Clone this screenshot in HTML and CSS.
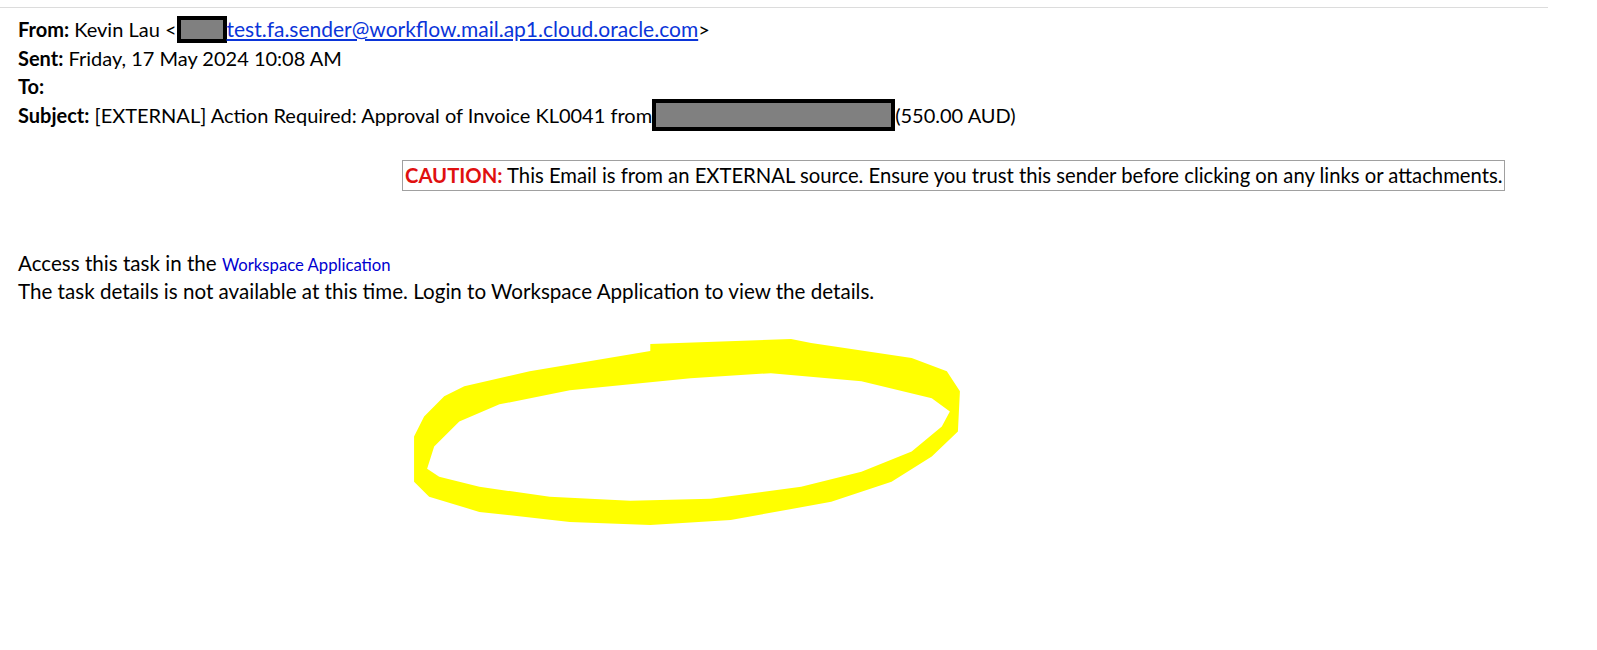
FILE: index.html
```html
<!DOCTYPE html>
<html lang="en">
<head>
    <meta charset="UTF-8">
    <title>Action Required: Approval of Invoice KL0041</title>
    <link rel="stylesheet" href="styles.css">
</head>
<body>
    <div class="top-rule"></div>

    <div class="mail-header">
        <div class="header-line"><b>From:</b> Kevin Lau &lt;<span class="redact redact-small"></span><a class="mail-link" href="#">test.fa.sender@workflow.mail.ap1.cloud.oracle.com</a>&gt;</div>
        <div class="header-line"><b>Sent:</b> Friday, 17 May 2024 10:08 AM</div>
        <div class="header-line"><b>To:</b></div>
        <div class="header-line"><b>Subject:</b> [EXTERNAL] Action Required: Approval of Invoice KL0041 from<span class="redact redact-wide"></span>(550.00 AUD)</div>
    </div>

    <div class="caution-box">
        <span class="caution-label">CAUTION:</span> This Email is from an EXTERNAL source. Ensure you trust this sender before clicking on any links or attachments.
    </div>

    <div class="mail-body">
        <div class="body-line">Access this task in the <a class="task-link" href="#">Workspace Application</a></div>
        <div class="body-line">The task details is not available at this time. Login to Workspace Application to view the details.</div>
    </div>

    <!-- highlighter scribble drawn over the empty area -->
    <svg class="scribble" width="555" height="191" viewBox="0 0 548 190">
        <path fill="#ffff00" fill-rule="evenodd" d="
            M0 98 L10 78 L30 58 L50 48 L115 33 L235 13 L235 6 L375 1 L395 5 L495 20 L530 33 L543 53 L541 93
            L515 118 L475 143 L415 163 L315 181 L235 186 L155 183 L65 173 L15 158 L0 143 Z
            M13 130 L20 108 L45 83 L85 66 L155 52 L275 40 L355 35 L445 43 L515 60 L533 73 L525 88
            L495 113 L445 133 L385 148 L295 160 L215 162 L135 158 L65 148 L25 138 Z"/>
    </svg>
</body>
</html>
```

FILE: styles.css
```css
body {
    font-family: Lato, 'Open Sans', sans-serif;
    font-size: 20.4px;
    color: #000;
    background: #fff;
    margin: 0;
    padding: 0 0 0 18px;
}

.top-rule {
    width: 1548px;
    margin: 7px 0 0 -18px;
    border-top: 1px solid #dcdcdc;
}

.mail-header {
    margin-top: 7px;
    font-size: 20px;
}

.header-line {
    height: 28.5px;
    line-height: 28.5px;
    white-space: nowrap;
}

.mail-link {
    color: #0b35d9;
    font-size: 21px;
    text-decoration: underline;
}

.redact {
    display: inline-block;
    box-sizing: border-box;
    background: #808080;
    border: 4px solid #000;
    vertical-align: middle;
}

.redact-small {
    width: 50px;
    height: 27px;
    margin-top: -4px;
}

.redact-wide {
    width: 243px;
    height: 32px;
    margin-top: -4px;
}

.caution-box {
    display: inline-block;
    margin: 31px 0 0 384px;
    padding: 0 2px;
    height: 28.5px;
    line-height: 28.5px;
    font-size: 20.25px;
    border: 1px solid #a0a0a0;
    white-space: nowrap;
}

.caution-label {
    color: #e01010;
    font-weight: bold;
}

.mail-body {
    margin-top: 58px;
    font-size: 20.6px;
}

.body-line {
    height: 28.5px;
    line-height: 28.5px;
    white-space: nowrap;
}

.task-link {
    color: #0000d0;
    font-size: 16.7px;
    text-decoration: none;
}

.scribble {
    position: absolute;
    left: 412px;
    top: 338px;
}
```
